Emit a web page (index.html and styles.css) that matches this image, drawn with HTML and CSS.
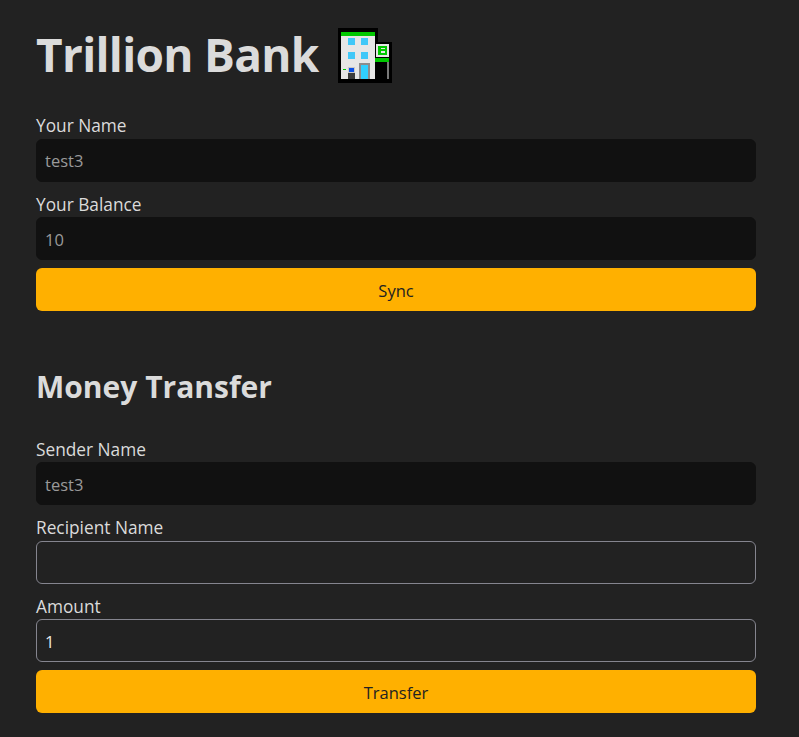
FILE: index.html
```html
<!DOCTYPE html>
<html lang="en">
<head>
<meta charset="utf-8">
<title>Trillion Bank</title>
<link rel="stylesheet" href="styles.css">
</head>
<body>
<main class="page">
  <h1 class="title"><span class="title-text">Trillion Bank</span>
    <svg class="bank-icon" viewBox="0 0 54 55" shape-rendering="crispEdges" aria-label="bank">
      <path fill="#000" d="M0 0h40v14h14v41H0z"/>
      <rect fill="#e6e6e6" x="3" y="7" width="34" height="44"/>
      <rect fill="#00c800" x="3" y="4" width="34" height="4"/>
      <g fill="#40c8f8">
        <rect x="10" y="10" width="7" height="7"/>
        <rect x="23" y="10" width="7" height="7"/>
        <rect x="10" y="24" width="7" height="7"/>
        <rect x="23" y="24" width="7" height="7"/>
      </g>
      <rect fill="#8c8c8c" x="21" y="35" width="11" height="16"/>
      <rect fill="#30d0ff" x="23" y="37" width="7" height="14"/>
      <rect fill="#c8c8c8" x="10" y="39" width="7" height="6"/>
      <rect fill="#0a50e6" x="11" y="40" width="5" height="4"/>
      <rect fill="#3c3c3c" x="10" y="45" width="7" height="6"/>
      <rect fill="#00c800" x="5" y="41" width="3" height="1"/>
      <rect fill="#e6e6e6" x="38" y="16" width="13" height="13"/>
      <path fill="#00c800" d="M40 18h9v9h-9zM43 20v1h4v-1zM43 23v2h4v-2z"/>
      <rect fill="#00c800" x="37" y="30" width="14" height="4"/>
      <rect fill="#787878" x="49" y="34" width="2" height="17"/>
    </svg>
  </h1>

  <form class="form">
    <label class="label" for="name">Your Name</label>
    <input class="field field-readonly" id="name" type="text" value="test3" readonly>
    <label class="label" for="balance">Your Balance</label>
    <input class="field field-readonly" id="balance" type="text" value="10" readonly>
    <button class="button" type="button">Sync</button>
  </form>

  <h2 class="subtitle">Money Transfer</h2>

  <form class="form">
    <label class="label" for="sender">Sender Name</label>
    <input class="field field-readonly" id="sender" type="text" value="test3" readonly>
    <label class="label" for="recipient">Recipient Name</label>
    <input class="field" id="recipient" type="text">
    <label class="label" for="amount">Amount</label>
    <input class="field" id="amount" type="text" value="1">
    <button class="button" type="button">Transfer</button>
  </form>
</main>
</body>
</html>
```

FILE: styles.css
```css
html, body {
  margin: 0;
  background: #222222;
}

.page {
  width: 720px;
  margin-left: 36px;
  font-family: "Open Sans", "Noto Sans", sans-serif;
  font-size: 16.5px;
  color: #dbdbdb;
}

.title {
  display: flex;
  align-items: center;
  gap: 19px;
  height: 111px;
  margin: 0;
  font-size: 46px;
  font-weight: 700;
  letter-spacing: -0.7px;
  color: #dbdbdb;
}

.title-text {
  padding-bottom: 4px;
}

.bank-icon {
  width: 54px;
  height: 55px;
  margin-top: -1px;
}

.form {
  display: flex;
  flex-direction: column;
}

.label {
  height: 27.5px;
  padding-top: 2px;
  box-sizing: border-box;
  line-height: 25.5px;
  font-size: 17.3px;
}

.field {
  box-sizing: border-box;
  width: 100%;
  height: 43px;
  margin: 0 0 8px;
  padding: 1px 8px 0;
  border: 1px solid #85858f;
  border-radius: 6px;
  background: transparent;
  color: #e8e8e8;
  font: inherit;
  outline: none;
}

.field-readonly {
  border-color: #111111;
  background: #111111;
  color: #9a9a9a;
}

.button {
  height: 43px;
  padding: 1px 0 0;
  border: 0;
  border-radius: 6px;
  background: #ffb000;
  color: #222222;
  font: inherit;
}

.subtitle {
  height: 93.5px;
  margin: 0;
  padding-top: 30px;
  line-height: 91px;
  font-size: 30px;
  font-weight: 700;
  color: #dbdbdb;
}
```
